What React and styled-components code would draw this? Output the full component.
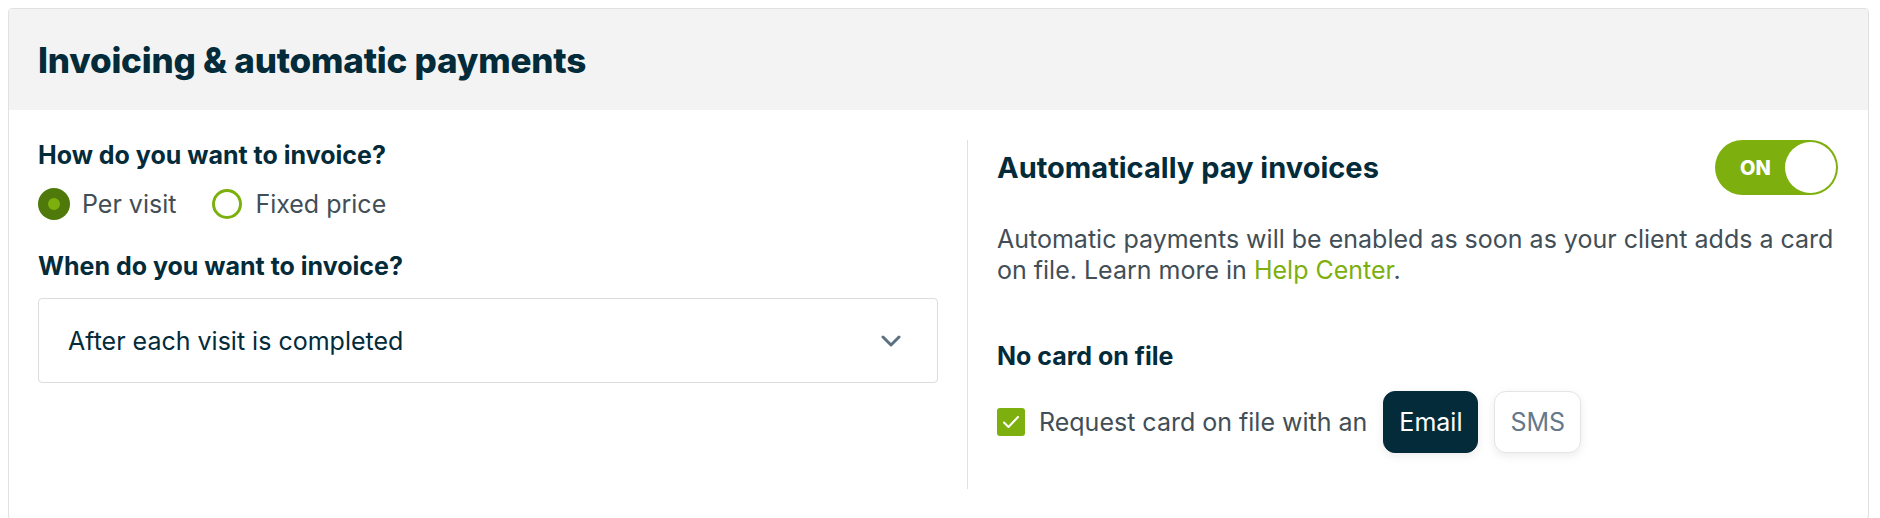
import React, { useState } from 'react';

// Style
import styled, { createGlobalStyle } from 'styled-components';

const GlobalStyle = createGlobalStyle`
  body {
    margin: 0;
    padding: 8px 11px 0 8px;
    background: #fff;
    font-family: Inter, 'Noto Sans', sans-serif;
    -webkit-font-smoothing: antialiased;
  }
`;

const App = () => {
  // useState
  const [method, setMethod] = useState('visit');
  const [autoPay, setAutoPay] = useState(true);
  const [requestCard, setRequestCard] = useState(true);
  const [channel, setChannel] = useState('email');

  return (
    <>
      <GlobalStyle />
      <Card>
        <CardHeader>
          <Title>Invoicing &amp; automatic payments</Title>
        </CardHeader>

        <CardBody>
          <LeftColumn>
            <Heading>How do you want to invoice?</Heading>
            <RadioGroup>
              <RadioLabel onClick={() => setMethod('visit')}>
                <RadioDot $checked={method === 'visit'} />
                Per visit
              </RadioLabel>
              <RadioLabel onClick={() => setMethod('fixed')}>
                <RadioDot $checked={method === 'fixed'} />
                Fixed price
              </RadioLabel>
            </RadioGroup>

            <Heading $gap={31}>When do you want to invoice?</Heading>
            <SelectBox>
              <span>After each visit is completed</span>
              <svg width="20" height="12" viewBox="0 0 20 12" fill="none">
                <polyline points="2,2 10,10 18,2" stroke="#5b7181" strokeWidth="3" strokeLinecap="round" strokeLinejoin="round" />
              </svg>
            </SelectBox>
          </LeftColumn>

          <RightColumn>
            <TopRow>
              <SubTitle>Automatically pay invoices</SubTitle>
              <Toggle $on={autoPay} onClick={() => setAutoPay(!autoPay)}>
                <ToggleText>{autoPay ? 'ON' : 'OFF'}</ToggleText>
                <Knob />
              </Toggle>
            </TopRow>

            <Description>
              Automatic payments will be enabled as soon as your client adds a card on file. Learn more in <HelpLink>Help Center</HelpLink>.
            </Description>

            <Heading $gap={55}>No card on file</Heading>

            <CheckRow>
              <CheckBox $checked={requestCard} onClick={() => setRequestCard(!requestCard)}>
                {requestCard && (
                  <svg width="18" height="14" viewBox="0 0 18 14" fill="none">
                    <polyline points="2,7.5 6.5,12 16,2" stroke="#fff" strokeWidth="2" strokeLinecap="round" strokeLinejoin="round" />
                  </svg>
                )}
              </CheckBox>
              <CheckText>Request card on file with an</CheckText>
              <ChannelButton $active={channel === 'email'} onClick={() => setChannel('email')}>
                Email
              </ChannelButton>
              <ChannelButton $active={channel === 'sms'} onClick={() => setChannel('sms')}>
                SMS
              </ChannelButton>
            </CheckRow>
          </RightColumn>
        </CardBody>
      </Card>
    </>
  );
};

export default App;

const Card = styled.div`
  border: 1px solid #e1e1e1;
  border-radius: 4px;
  background: #fff;
  overflow: hidden;
`;

const CardHeader = styled.div`
  height: 101px;
  background: #f3f3f3;
  display: flex;
  align-items: center;
  padding: 0 29px;
`;

const Title = styled.h1`
  margin: 0;
  font-size: 35px;
  font-weight: 800;
  color: #032b3a;
  letter-spacing: -0.2px;
`;

const CardBody = styled.div`
  display: grid;
  grid-template-columns: 929fr 871fr;
  padding: 30px 30px 30px 29px;
`;

const LeftColumn = styled.div`
  padding-right: 29px;
  display: flex;
  flex-direction: column;
`;

const RightColumn = styled.div`
  border-left: 1px solid #e1e1e1;
  padding: 0 0 36px 29px;
  display: flex;
  flex-direction: column;
`;

const Heading = styled.h3`
  margin: ${({ $gap }) => ($gap ? `${$gap}px` : '0')} 0 0;
  font-size: 25px;
  line-height: 30px;
  font-weight: 700;
  color: #032b3a;
`;

const RadioGroup = styled.div`
  display: flex;
  align-items: center;
  gap: 36px;
  margin-top: 18px;
  height: 32px;
  padding-left: 1px;
`;

const RadioLabel = styled.label`
  display: flex;
  align-items: center;
  gap: 13px;
  font-size: 25px;
  color: #424e56;
  cursor: pointer;
`;

const RadioDot = styled.span`
  box-sizing: border-box;
  width: 30px;
  height: 30px;
  border-radius: 50%;
  border: ${({ $checked }) => ($checked ? '9px solid #4f7a0b' : '3px solid #7db00e')};
  background: ${({ $checked }) => ($checked ? '#7db00e' : '#fff')};
  box-shadow: ${({ $checked }) => ($checked ? '0 0 0 1px #4f7a0b' : 'none')};
`;

const SelectBox = styled.div`
  margin-top: 17px;
  height: 85px;
  box-sizing: border-box;
  border: 1px solid #dcdcdc;
  border-radius: 4px;
  display: flex;
  align-items: center;
  justify-content: space-between;
  padding: 0 36px 0 29px;
  font-size: 25px;
  color: #032b3a;
  cursor: pointer;
`;

const TopRow = styled.div`
  display: flex;
  align-items: center;
  justify-content: space-between;
  height: 55px;
`;

const SubTitle = styled.h2`
  margin: 0;
  font-size: 29px;
  font-weight: 700;
  color: #032b3a;
`;

const Toggle = styled.div`
  width: 123px;
  height: 55px;
  box-sizing: border-box;
  border-radius: 28px;
  background: ${({ $on }) => ($on ? '#7db00e' : '#c8c8c8')};
  display: flex;
  align-items: center;
  justify-content: space-between;
  padding: 2px 2px 2px 25px;
  cursor: pointer;
`;

const ToggleText = styled.span`
  font-size: 20px;
  font-weight: 800;
  color: #fff;
`;

const Knob = styled.span`
  width: 51px;
  height: 51px;
  border-radius: 50%;
  background: #fff;
`;

const Description = styled.p`
  margin: 29px 0 0;
  font-size: 25px;
  line-height: 31px;
  color: #424e56;
`;

const HelpLink = styled.a`
  color: #7db00e;
  text-decoration: none;
  cursor: pointer;
`;

const CheckRow = styled.div`
  margin-top: 20px;
  display: flex;
  align-items: center;
`;

const CheckBox = styled.span`
  width: 28px;
  height: 28px;
  border-radius: 3px;
  background: ${({ $checked }) => ($checked ? '#7db00e' : '#fff')};
  border: ${({ $checked }) => ($checked ? 'none' : '2px solid #b5b5b5')};
  display: flex;
  align-items: center;
  justify-content: center;
  cursor: pointer;
`;

const CheckText = styled.span`
  margin-left: 14px;
  font-size: 25px;
  color: #424e56;
`;

const ChannelButton = styled.button`
  margin-left: 16px;
  height: 62px;
  padding: 0 15px;
  border-radius: 12px;
  font-family: Inter, sans-serif;
  font-size: 25px;
  border: 1px solid ${({ $active }) => ($active ? '#032b3a' : '#e4e4e4')};
  background: ${({ $active }) => ($active ? '#032b3a' : '#fff')};
  color: ${({ $active }) => ($active ? '#fff' : '#65788a')};
  box-shadow: 0 3px 10px rgba(0, 0, 0, 0.08);
  cursor: pointer;
`;
